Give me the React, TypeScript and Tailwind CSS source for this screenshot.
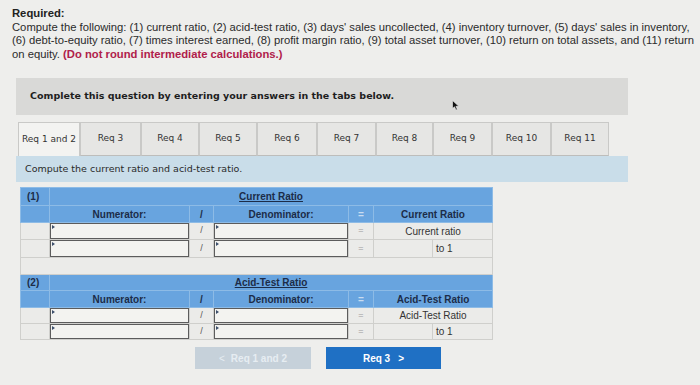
import React from "react";

const tabs = [
  { label: "Req 1 and 2", w: "w-[62px]" },
  { label: "Req 3", w: "w-[61px]" },
  { label: "Req 4", w: "w-[58px]" },
  { label: "Req 5", w: "w-[58px]" },
  { label: "Req 6", w: "w-[60px]" },
  { label: "Req 7", w: "w-[59px]" },
  { label: "Req 8", w: "w-[57px]" },
  { label: "Req 9", w: "w-[59px]" },
  { label: "Req 10", w: "w-[59px]" },
  { label: "Req 11", w: "w-[58px]" },
];

const InputCell = ({ h }: { h: string }) => (
  <td className="p-0 border border-[#cfcfcc] align-top">
    <div className={`${h} relative w-full border border-[#5c5c5c] bg-[#f3f3f0]`}>
      <span className="absolute left-[1px] top-[1px] h-0 w-0 border-y-[2px] border-l-[3px] border-y-transparent border-l-[#3d4f6b]" />
    </div>
  </td>
);

const RatioSection = ({
  num,
  title,
  result,
  resultLabel,
  rowH,
  inH,
}: {
  num: string;
  title: string;
  result: string;
  resultLabel: string;
  rowH: string[];
  inH: string[];
}) => (
  <>
    <tr className={rowH[0]}>
      <td className="border border-[#8dbbe6] bg-[#68a4df] pl-[6px] text-[10px] font-bold text-[#1c2c48]">{num}</td>
      <td colSpan={6} className="border border-[#8dbbe6] bg-[#68a4df] text-center text-[10px] font-bold text-[#1c2c48]">
        <span className="underline">{title}</span>
      </td>
    </tr>
    <tr className={rowH[1]}>
      <td className="border border-[#8dbbe6] bg-[#68a4df]" />
      <td className="border border-[#8dbbe6] bg-[#68a4df] text-center text-[10px] font-bold text-[#1c2c48]">Numerator:</td>
      <td className="border border-[#8dbbe6] bg-[#68a4df] text-center text-[10px] font-bold text-[#1c2c48]">/</td>
      <td className="border border-[#8dbbe6] bg-[#68a4df] text-center text-[10px] font-bold text-[#1c2c48]">Denominator:</td>
      <td className="border border-[#8dbbe6] bg-[#68a4df] text-center text-[10px] font-bold text-[#c9dcf0]">=</td>
      <td colSpan={2} className="border border-[#8dbbe6] bg-[#68a4df] text-center text-[10px] font-bold text-[#1c2c48]">{result}</td>
    </tr>
    <tr className={rowH[2]}>
      <td className="border border-[#cfcfcc] bg-[#ebebe9]" />
      <InputCell h={inH[0]} />
      <td className="border border-[#cfcfcc] bg-[#ebebe9] text-center text-[9px] text-[#555]">/</td>
      <InputCell h={inH[0]} />
      <td className="border border-[#cfcfcc] bg-[#ebebe9] text-center text-[9px] text-[#9a9a9a]">=</td>
      <td colSpan={2} className="border border-[#cfcfcc] bg-[#ebebe9] text-center text-[10px] text-[#333]">{resultLabel}</td>
    </tr>
    <tr className={rowH[3]}>
      <td className="border border-[#cfcfcc] bg-[#ebebe9]" />
      <InputCell h={inH[1]} />
      <td className="border border-[#cfcfcc] bg-[#ebebe9] text-center text-[9px] text-[#555]">/</td>
      <InputCell h={inH[1]} />
      <td className="border border-[#cfcfcc] bg-[#ebebe9] text-center text-[9px] text-[#9a9a9a]">=</td>
      <td className="border border-[#cfcfcc] bg-[#ebebe9]" />
      <td className="border border-[#cfcfcc] bg-[#ebebe9] pl-[3px] text-[10px] text-[#333]">to 1</td>
    </tr>
  </>
);

export default function App() {
  return (
    <div className="relative h-[385px] w-[700px] overflow-hidden bg-[#eeeeec] font-['Liberation_Sans',Arial,sans-serif] text-[#2b2b2b]">
      <div className="pl-[12px] pt-[7px] text-[11.25px] leading-[13.5px]">
        <p className="font-bold text-[#222]">Required:</p>
        <p className="whitespace-nowrap">
          Compute the following: (1) current ratio, (2) acid-test ratio, (3) days' sales uncollected, (4) inventory turnover, (5) days' sales in inventory,
        </p>
        <p className="whitespace-nowrap">
          (6) debt-to-equity ratio, (7) times interest earned, (8) profit margin ratio, (9) total asset turnover, (10) return on total assets, and (11) return
        </p>
        <p className="whitespace-nowrap">
          on equity. <span className="font-bold text-[#b0204a]">(Do not round intermediate calculations.)</span>
        </p>
      </div>

      <div className="ml-[16px] mt-[17px] flex h-[37px] w-[612px] items-center bg-[#d9d9d7] pl-[14px] font-['DejaVu_Sans',Verdana,sans-serif] text-[9.5px] font-bold text-[#1e1e1e]">
        Complete this question by entering your answers in the tabs below.
      </div>

      <div className="ml-[18px] mt-[7px] flex h-[34px] font-['DejaVu_Sans',Verdana,sans-serif] text-[9px] text-[#333]">
        {tabs.map((t, i) => (
          <div
            key={t.label}
            className={`${t.w} flex items-center justify-center border border-[#c9c9c7] ${
              i === 0 ? "border-b-0 bg-[#f3f3f1]" : "border-b-[#bdbdbb] bg-[#e6e6e4]"
            }`}
          >
            {t.label}
          </div>
        ))}
      </div>

      <div className="ml-[16px] flex h-[26px] w-[612px] items-center bg-[#c9dde9] pl-[9px] font-['DejaVu_Sans',Verdana,sans-serif] text-[9.5px] text-[#2a2a2a]">
        Compute the current ratio and acid-test ratio.
      </div>

      <div className="ml-[20px] mt-[5px]">
        <table className="w-[472px] table-fixed border-collapse border border-[#bdbdbb] bg-[#ebebe9]">
          <colgroup>
            <col className="w-[29px]" />
            <col className="w-[140px]" />
            <col className="w-[24px]" />
            <col className="w-[135px]" />
            <col className="w-[25px]" />
            <col className="w-[59px]" />
            <col className="w-[60px]" />
          </colgroup>
          <tbody>
            <RatioSection
              num="(1)"
              title="Current Ratio"
              result="Current Ratio"
              resultLabel="Current ratio"
              rowH={["h-[18px]", "h-[17px]", "h-[17px]", "h-[18px]"]}
              inH={["h-[16px]", "h-[17px]"]}
            />
            <tr className="h-[17px]">
              <td colSpan={7} className="border border-[#cfcfcc] bg-[#ebebe9]" />
            </tr>
            <RatioSection
              num="(2)"
              title="Acid-Test Ratio"
              result="Acid-Test Ratio"
              resultLabel="Acid-Test Ratio"
              rowH={["h-[16px]", "h-[17px]", "h-[16px]", "h-[16px]"]}
              inH={["h-[15px]", "h-[15px]"]}
            />
          </tbody>
        </table>
      </div>

      <div className="ml-[195px] mt-[7px] flex gap-[15px] text-[10px] font-bold">
        <div className="flex h-[22px] w-[116px] items-center justify-center bg-[#c6d1da] text-[#e6edf2]">
          <span className="mr-[6px] font-normal">&lt;</span>Req 1 and 2
        </div>
        <div className="flex h-[22px] w-[115px] items-center justify-center bg-[#1f70c4] text-white">
          Req 3<span className="ml-[8px]">&gt;</span>
        </div>
      </div>

      <svg className="absolute left-[452px] top-[100px]" width="8" height="11" viewBox="0 0 8 11">
        <path d="M0.5 0.5 L0.5 8.5 L2.5 6.8 L4 10 L5.3 9.4 L3.9 6.3 L6.8 6.3 Z" fill="#111" stroke="#eee" strokeWidth="0.6" />
      </svg>
    </div>
  );
}
